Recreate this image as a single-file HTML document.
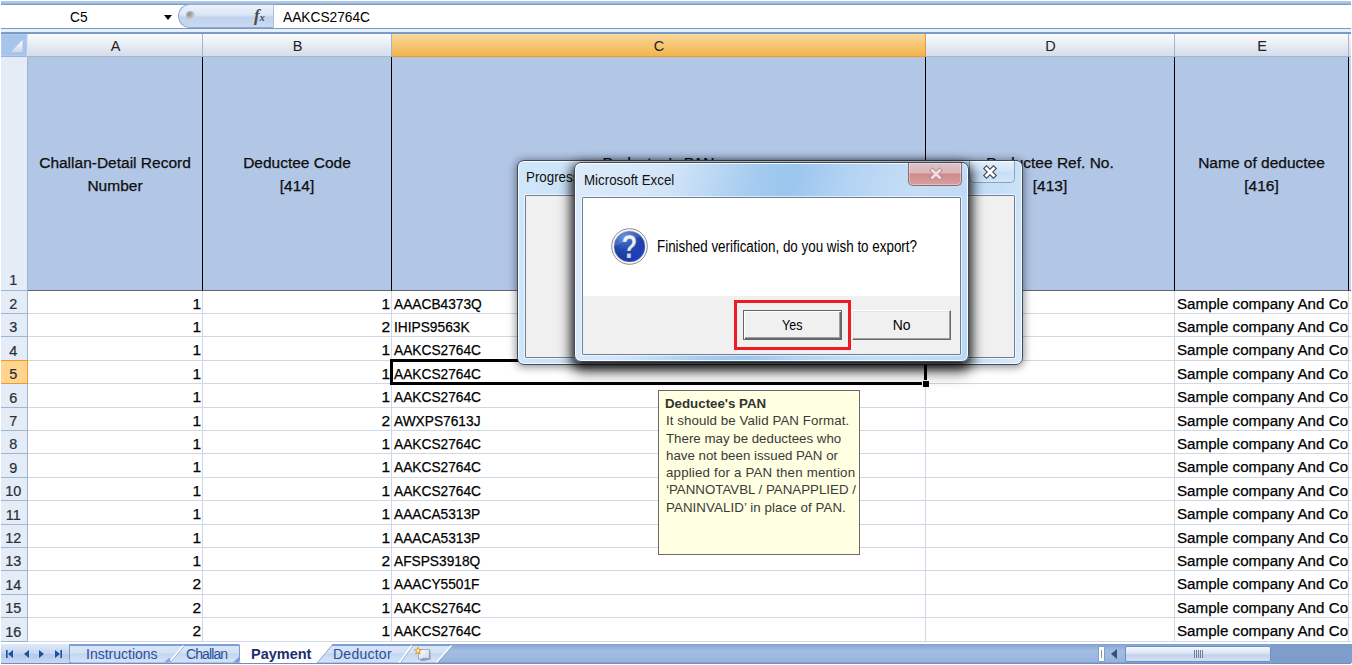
<!DOCTYPE html><html><head><meta charset="utf-8"><title>Microsoft Excel</title><style>*{box-sizing:border-box;margin:0;padding:0}
html,body{width:1352px;height:665px;overflow:hidden;background:#fff}
body{font-family:"Liberation Sans",sans-serif;color:#000}
#app{position:relative;width:1352px;height:665px;overflow:hidden;background:#fff}
/* formula bar */
#fbar{position:absolute;left:0;top:0;width:1352px;height:34px;background:#fff}
#fbar .topline{position:absolute;left:1px;top:1px;right:1px;height:3.500px;background:linear-gradient(#b4cbea 0,#a7c1e5 60%,#7b9cc6 70%,#7b9cc6 100%)}
#fbar .botline{position:absolute;left:1px;top:28px;right:1px;height:6px;background:linear-gradient(#7a9bc4 0,#7a9bc4 1px,#e6effc 1px,#e6effc 4.300px,#7f9ec7 4.300px,#7595c0 6px)}
#fbar .name{position:absolute;left:70px;top:8px;font-size:15.500px;line-height:18px;color:#000;transform:scaleX(.886);transform-origin:0 50%}
#fbar .dd{position:absolute;left:164px;top:15px;width:0;height:0;border-left:4px solid transparent;border-right:4px solid transparent;border-top:5px solid #000}
#fbar .pill{position:absolute;left:178px;top:4px;width:96px;height:24px;border:1px solid #8faad3;border-right:1px solid #a9bfdf;border-radius:12px 0 0 12px;background:linear-gradient(#eef3fb 0%,#dbe6f6 45%,#c0d3ee 55%,#c9daf1 100%)}
#fbar .knob{position:absolute;left:185.500px;top:11px;width:9px;height:9px;border-radius:50%;background:radial-gradient(circle at 35% 35%,#8e8e8e,#c9c9c9 60%,#f2f2f2)}
#fbar .fx{position:absolute;left:254px;top:6px;font-family:"Liberation Serif",serif;font-style:italic;font-weight:bold;font-size:17px;line-height:20px;color:#4a4a4a}
#fbar .fx small{font-size:10px;font-style:italic}
#fbar .val{position:absolute;left:282.500px;top:8px;font-size:15.500px;line-height:18px;color:#000;transform:scaleX(.886);transform-origin:0 50%}
/* column headers */
#colhdr{position:absolute;left:0;top:34px;width:1352px;height:23px}
.corner{position:absolute;left:1px;top:0;width:27px;height:23px;background:#a9c4ec;border-right:1px solid #d9e4f5;border-bottom:1px solid #9db4d8;box-shadow:inset 0 0 0 1px #b3cbef}
.corner svg{position:absolute;left:9px;top:5px}
.ch{position:absolute;top:0;height:23px;background:linear-gradient(#f9fafc 0%,#eef1f7 35%,#dfe5ef 70%,#d5dde9 100%);border-right:1px solid #9eb6ce;border-bottom:1px solid #9eb6ce;text-align:center;font-size:14.5px;line-height:23px;color:#222;padding-top:1px;padding-left:1px}
.ch.sel{background:linear-gradient(#f9d99f 0%,#f6c878 45%,#f1b549 100%);border-right:1px solid #f29536;border-left:0;border-bottom:1px solid #f29536;border-top:0;line-height:22px}
/* row 1 */
#row1{position:absolute;left:0;top:57px;width:1352px;height:234px}
.rh{position:absolute;left:1px;top:0;width:27px;height:100%;background:#e4ecf7;border-right:1px solid #9eb6ce;border-bottom:1px solid #9eb6ce;text-align:center;font-size:15px;color:#222}
.rh span{position:absolute;left:-2.500px;right:0;bottom:0.500px;font-size:15.500px;color:#26323c;line-height:19px;transform:scaleX(.93);-webkit-text-stroke:.2px #222}
.rh.r1 span{bottom:1px;line-height:18px}
.rh.sel{background:#ffd58d;border-bottom:1px solid #f29536;border-right:1px solid #f29536;box-shadow:0 -1px 0 #f29536}
.hc{position:absolute;top:0;height:234px;background:#b2c6e6;border-right:1px solid #000;border-bottom:1px solid #63666d}
.ht{position:absolute;left:0;right:0;top:94px;text-align:center;font-size:15.500px;line-height:23.4px;color:#111}
/* grid */
#grid{position:absolute;left:0;top:0;width:1352px;height:665px}
.row{position:absolute;left:0;width:1352px}
.c{position:absolute;top:0;height:100%;border-right:1px solid #d0d7e5;border-bottom:1px solid #d0d7e5;font-size:15.500px;line-height:22px;padding-top:2px;white-space:nowrap;overflow:hidden;color:#000}
.c.num{text-align:right;padding-right:1px}
.c.txt{text-align:left;padding-left:2px}
.c span{display:inline-block;transform-origin:0 50%}
.c.pan{padding-left:2px}
.c.num span{transform:none}
.c.pan span{transform:scaleX(.886)}
.c.nm span{transform:scaleX(.978)}
/* selection */
#selbox{position:absolute;left:390px;top:359px;width:537px;height:26px;border:3px solid #000}
#selhandle{position:absolute;left:922px;top:380px;width:7px;height:7px;background:#000;border:1px solid #fff;border-right:0;border-bottom:0}
/* tooltip */
#tip{position:absolute;left:658px;top:390px;width:202px;height:165px;background:#ffffe1;border:1px solid #6b6b6b;padding:4px 0 0 7px;font-size:13.300px;line-height:17.3px;color:#3a3a3a;white-space:nowrap;overflow:hidden}
#tip b{color:#333;margin-left:-1px}
/* tab bar */
#tabbar{position:absolute;left:0;top:642px;width:1352px;height:23px;background:#fff}
#tabbar .tbbg{position:absolute;left:1px;top:2px;right:1px;height:20px;background:linear-gradient(#7f9fd0 0,#8dabd8 2px,#a3bce2 7px,#9db7df 14px,#97b2dc 18px,#6f8fc4 19px,#6f8fc4 20px)}
#tabbar .navbg{position:absolute;left:1px;top:2px;width:68px;height:19px;background:linear-gradient(#dfe9f8,#c5d6f0 50%,#b5caea 55%,#c7d8f1)}
#tabbar .nav{position:absolute;left:0;top:3px}
#tabbar .tabs{position:absolute;left:68px;top:3px;overflow:visible}
#tabbar .tab{position:absolute;top:3px;font-size:14px;line-height:18px;color:#2a4f9c;white-space:nowrap}
#tabbar .tab.act{font-weight:bold;color:#1c2f6b;font-size:14.500px}
#tabbar .newtab{position:absolute;left:413.500px;top:4.500px}
#tabbar .split{position:absolute;left:1098px;top:4px;width:7px;height:16px;background:#fff;border:1px solid #7f9fce;border-radius:1px}
#tabbar .split:after{content:"";position:absolute;left:2px;top:3px;width:1px;height:8px;background:#7f8fa8}
#tabbar .larrow{position:absolute;left:1111px;top:7px;width:0;height:0;border-top:5px solid transparent;border-bottom:5px solid transparent;border-right:6px solid #3b4f73}
#tabbar .thumb{position:absolute;left:1125px;top:4px;width:146px;height:16px;border:1px solid #6f8fc0;border-radius:2px;background:linear-gradient(#f4f7fc,#dbe5f4 45%,#c3d3ec 55%,#d2dff2)}
#tabbar .thumb i{position:absolute;left:68px;top:3px;width:9px;height:8px;background:repeating-linear-gradient(90deg,#6d7f9e 0,#6d7f9e 1px,transparent 1px,transparent 2px)}
#tabbar .track{position:absolute;left:1271px;top:2px;width:81px;height:19px;background:#7f9dcb}
#tabbar .botl{position:absolute;left:1px;right:1px;top:20.500px;height:1.500px;background:#6f8fc4}
/* windows */
.win{position:absolute;border:1px solid #3c4a5c;border-radius:7px;background:linear-gradient(105deg,#dcebfa 0%,#d2e5f8 22%,#a3caef 42%,#9cc6ee 50%,#b3d3f3 62%,#c5def6 78%,#bbd8f4 100%);box-shadow:inset 0 0 0 1px rgba(255,255,255,.85)}
.win .title{position:absolute;font-size:15px;line-height:18px;color:#111;white-space:nowrap;transform:scaleX(.888);transform-origin:0 50%}
.win .client{position:absolute;background:#f0f0f0;border:1px solid #6f7f95;border-radius:1px;box-shadow:0 0 0 1px rgba(255,255,255,.6)}
#w1{left:517px;top:160px;width:506px;height:205px;background:linear-gradient(105deg,#d0e6fa 0%,#c8e0f8 30%,#b4d3f2 60%,#c6dff7 88%,#d9eafb 100%);box-shadow:inset 0 0 0 1px rgba(255,255,255,.85),0 1px 9px 1px rgba(0,0,0,.45)}
#w1 .title{left:8px;top:7px}
#w1 .client{left:7px;top:34px;width:490px;height:163px}
#w1 .xbtn{position:absolute;left:451px;top:0;width:46px;height:22px;border:1px solid #8aa3c4;border-top:0;border-radius:0 0 5px 5px;background:linear-gradient(rgba(255,255,255,.55),rgba(255,255,255,.15) 50%,rgba(255,255,255,0) 55%,rgba(255,255,255,.2))}
.xbtn svg{position:absolute;left:14px;top:4px}
#w1 .xbtn svg{left:12px;top:4px}
#w2shadow{position:absolute;left:574px;top:162px;width:395px;height:200px;border-radius:7px;box-shadow:0 4px 11px 2px rgba(0,0,0,.8),0 9px 16px 2px rgba(0,0,0,.4)}
#w2{left:574px;top:162px;width:395px;height:200px}
#w2 .title{left:9px;top:8px}
#w2 .client{left:7px;top:34px;width:379px;height:158px}
#w2 .xbtn{position:absolute;left:333px;top:0;width:54px;height:23px;border:1px solid #8d6a70;border-top:0;border-radius:0 0 5px 5px;background:linear-gradient(#dcc3c8 0%,#dbb5b8 45%,#cf8a8a 50%,#d7a0a0 100%);box-shadow:inset 0 0 0 1px rgba(255,255,255,.35)}
#w2 .xbtn svg{left:19px;top:3.500px}
#w2 .white{position:absolute;left:0;top:0;right:0;height:98px;background:#fff}
#w2 .qicon{position:absolute;left:28px;top:30px}
#w2 .msg{position:absolute;left:73.500px;top:40px;font-size:16px;line-height:18px;color:#000;white-space:nowrap;transform:translateY(-.5px) scaleX(.8376);transform-origin:0 50%}
#w2 .redrect{position:absolute;left:151px;top:102px;width:117px;height:50px;border:3px solid #ed1c24}
#w2 .btn{position:absolute;top:112px;width:99px;height:30px;background:#f0f0f0;border:1px solid #fff;border-right-color:#696969;border-bottom-color:#696969;box-shadow:inset -1px -1px 0 #a0a0a0,inset 1px 1px 0 #e3e3e3;text-align:center;font-size:15px;line-height:28px;color:#000}
#w2 .btn span{display:inline-block}
#w2 .btn.yes span{transform:scaleX(.83)}
#w2 .btn.no span{transform:scaleX(.93)}
#w2 .btn.yes{left:160px;border:1px solid #646464;box-shadow:inset 1px 1px 0 #fff,inset -1px -1px 0 #696969,inset -2px -2px 0 #a0a0a0}
#w2 .btn.no{left:269px}

.c,.ht{-webkit-text-stroke:.25px #000}
</style></head><body>
<div id="app">
<div id="fbar"><div class="topline"></div><div class="botline"></div>
<div class="name">C5</div><div class="dd"></div>
<div class="pill"></div><div class="knob"></div>
<div class="fx">f<small>x</small></div>
<div class="val">AAKCS2764C</div></div>

<div id="colhdr">
<div class="corner"><svg width="14" height="14" viewBox="0 0 14 14"><defs><linearGradient id="cg" x1="0" y1="0" x2="0" y2="1"><stop offset="0" stop-color="#fff"/><stop offset="1" stop-color="#cfd8e8"/></linearGradient></defs><path d="M12.500 1V13H1Z" fill="url(#cg)"/></svg></div>
<div class="ch" style="left:28px;width:175px"><span>A</span></div>
<div class="ch" style="left:203px;width:189px"><span>B</span></div>
<div class="ch sel" style="left:392px;width:534px"><span>C</span></div>
<div class="ch" style="left:926px;width:249px"><span>D</span></div>
<div class="ch" style="left:1175px;width:174px"><span>E</span></div>
<div class="ch" style="left:1349px;width:2px;border-right:0"></div>
</div>
<div id="row1">
<div class="rh r1"><span>1</span></div>
<div class="hc" style="left:28px;width:175px"><div class="ht">Challan-Detail Record<br>Number</div></div>
<div class="hc" style="left:203px;width:189px"><div class="ht">Deductee Code<br>[414]</div></div>
<div class="hc" style="left:392px;width:534px"><div class="ht">Deductee's PAN<br>[415]</div></div>
<div class="hc" style="left:926px;width:249px"><div class="ht">Deductee Ref. No.<br>[413]</div></div>
<div class="hc" style="left:1175px;width:174px"><div class="ht">Name of deductee<br>[416]</div></div>
<div class="hc" style="left:1349px;width:2px;border-right:0;background:#c5d4f0"></div>
</div>
<div id="grid">
<div class="row" style="top:291px;height:23px">
<div class="rh"><span>2</span></div>
<div class="c num" style="left:28px;width:175px"><span>1</span></div>
<div class="c num" style="left:203px;width:189px"><span>1</span></div>
<div class="c txt pan" style="left:392px;width:534px"><span>AAACB4373Q</span></div>
<div class="c" style="left:926px;width:249px"></div>
<div class="c txt nm" style="left:1175px;width:174px"><span>Sample company And Co</span></div>
<div class="c" style="left:1349px;width:2px;border-right:0"></div>
</div>
<div class="row" style="top:314px;height:23px">
<div class="rh"><span>3</span></div>
<div class="c num" style="left:28px;width:175px"><span>1</span></div>
<div class="c num" style="left:203px;width:189px"><span>2</span></div>
<div class="c txt pan" style="left:392px;width:534px"><span>IHIPS9563K</span></div>
<div class="c" style="left:926px;width:249px"></div>
<div class="c txt nm" style="left:1175px;width:174px"><span>Sample company And Co</span></div>
<div class="c" style="left:1349px;width:2px;border-right:0"></div>
</div>
<div class="row" style="top:337px;height:24px">
<div class="rh"><span>4</span></div>
<div class="c num" style="left:28px;width:175px"><span>1</span></div>
<div class="c num" style="left:203px;width:189px"><span>1</span></div>
<div class="c txt pan" style="left:392px;width:534px"><span>AAKCS2764C</span></div>
<div class="c" style="left:926px;width:249px"></div>
<div class="c txt nm" style="left:1175px;width:174px"><span>Sample company And Co</span></div>
<div class="c" style="left:1349px;width:2px;border-right:0"></div>
</div>
<div class="row" style="top:361px;height:23px">
<div class="rh sel"><span>5</span></div>
<div class="c num" style="left:28px;width:175px"><span>1</span></div>
<div class="c num" style="left:203px;width:189px"><span>1</span></div>
<div class="c txt pan" style="left:392px;width:534px"><span>AAKCS2764C</span></div>
<div class="c" style="left:926px;width:249px"></div>
<div class="c txt nm" style="left:1175px;width:174px"><span>Sample company And Co</span></div>
<div class="c" style="left:1349px;width:2px;border-right:0"></div>
</div>
<div class="row" style="top:384px;height:24px">
<div class="rh"><span>6</span></div>
<div class="c num" style="left:28px;width:175px"><span>1</span></div>
<div class="c num" style="left:203px;width:189px"><span>1</span></div>
<div class="c txt pan" style="left:392px;width:534px"><span>AAKCS2764C</span></div>
<div class="c" style="left:926px;width:249px"></div>
<div class="c txt nm" style="left:1175px;width:174px"><span>Sample company And Co</span></div>
<div class="c" style="left:1349px;width:2px;border-right:0"></div>
</div>
<div class="row" style="top:408px;height:23px">
<div class="rh"><span>7</span></div>
<div class="c num" style="left:28px;width:175px"><span>1</span></div>
<div class="c num" style="left:203px;width:189px"><span>2</span></div>
<div class="c txt pan" style="left:392px;width:534px"><span>AWXPS7613J</span></div>
<div class="c" style="left:926px;width:249px"></div>
<div class="c txt nm" style="left:1175px;width:174px"><span>Sample company And Co</span></div>
<div class="c" style="left:1349px;width:2px;border-right:0"></div>
</div>
<div class="row" style="top:431px;height:23px">
<div class="rh"><span>8</span></div>
<div class="c num" style="left:28px;width:175px"><span>1</span></div>
<div class="c num" style="left:203px;width:189px"><span>1</span></div>
<div class="c txt pan" style="left:392px;width:534px"><span>AAKCS2764C</span></div>
<div class="c" style="left:926px;width:249px"></div>
<div class="c txt nm" style="left:1175px;width:174px"><span>Sample company And Co</span></div>
<div class="c" style="left:1349px;width:2px;border-right:0"></div>
</div>
<div class="row" style="top:454px;height:24px">
<div class="rh"><span>9</span></div>
<div class="c num" style="left:28px;width:175px"><span>1</span></div>
<div class="c num" style="left:203px;width:189px"><span>1</span></div>
<div class="c txt pan" style="left:392px;width:534px"><span>AAKCS2764C</span></div>
<div class="c" style="left:926px;width:249px"></div>
<div class="c txt nm" style="left:1175px;width:174px"><span>Sample company And Co</span></div>
<div class="c" style="left:1349px;width:2px;border-right:0"></div>
</div>
<div class="row" style="top:478px;height:23px">
<div class="rh"><span>10</span></div>
<div class="c num" style="left:28px;width:175px"><span>1</span></div>
<div class="c num" style="left:203px;width:189px"><span>1</span></div>
<div class="c txt pan" style="left:392px;width:534px"><span>AAKCS2764C</span></div>
<div class="c" style="left:926px;width:249px"></div>
<div class="c txt nm" style="left:1175px;width:174px"><span>Sample company And Co</span></div>
<div class="c" style="left:1349px;width:2px;border-right:0"></div>
</div>
<div class="row" style="top:501px;height:24px">
<div class="rh"><span>11</span></div>
<div class="c num" style="left:28px;width:175px"><span>1</span></div>
<div class="c num" style="left:203px;width:189px"><span>1</span></div>
<div class="c txt pan" style="left:392px;width:534px"><span>AAACA5313P</span></div>
<div class="c" style="left:926px;width:249px"></div>
<div class="c txt nm" style="left:1175px;width:174px"><span>Sample company And Co</span></div>
<div class="c" style="left:1349px;width:2px;border-right:0"></div>
</div>
<div class="row" style="top:525px;height:23px">
<div class="rh"><span>12</span></div>
<div class="c num" style="left:28px;width:175px"><span>1</span></div>
<div class="c num" style="left:203px;width:189px"><span>1</span></div>
<div class="c txt pan" style="left:392px;width:534px"><span>AAACA5313P</span></div>
<div class="c" style="left:926px;width:249px"></div>
<div class="c txt nm" style="left:1175px;width:174px"><span>Sample company And Co</span></div>
<div class="c" style="left:1349px;width:2px;border-right:0"></div>
</div>
<div class="row" style="top:548px;height:23px">
<div class="rh"><span>13</span></div>
<div class="c num" style="left:28px;width:175px"><span>1</span></div>
<div class="c num" style="left:203px;width:189px"><span>2</span></div>
<div class="c txt pan" style="left:392px;width:534px"><span>AFSPS3918Q</span></div>
<div class="c" style="left:926px;width:249px"></div>
<div class="c txt nm" style="left:1175px;width:174px"><span>Sample company And Co</span></div>
<div class="c" style="left:1349px;width:2px;border-right:0"></div>
</div>
<div class="row" style="top:571px;height:24px">
<div class="rh"><span>14</span></div>
<div class="c num" style="left:28px;width:175px"><span>2</span></div>
<div class="c num" style="left:203px;width:189px"><span>1</span></div>
<div class="c txt pan" style="left:392px;width:534px"><span>AAACY5501F</span></div>
<div class="c" style="left:926px;width:249px"></div>
<div class="c txt nm" style="left:1175px;width:174px"><span>Sample company And Co</span></div>
<div class="c" style="left:1349px;width:2px;border-right:0"></div>
</div>
<div class="row" style="top:595px;height:23px">
<div class="rh"><span>15</span></div>
<div class="c num" style="left:28px;width:175px"><span>2</span></div>
<div class="c num" style="left:203px;width:189px"><span>1</span></div>
<div class="c txt pan" style="left:392px;width:534px"><span>AAKCS2764C</span></div>
<div class="c" style="left:926px;width:249px"></div>
<div class="c txt nm" style="left:1175px;width:174px"><span>Sample company And Co</span></div>
<div class="c" style="left:1349px;width:2px;border-right:0"></div>
</div>
<div class="row" style="top:618px;height:24px">
<div class="rh"><span>16</span></div>
<div class="c num" style="left:28px;width:175px"><span>2</span></div>
<div class="c num" style="left:203px;width:189px"><span>1</span></div>
<div class="c txt pan" style="left:392px;width:534px"><span>AAKCS2764C</span></div>
<div class="c" style="left:926px;width:249px"></div>
<div class="c txt nm" style="left:1175px;width:174px"><span>Sample company And Co</span></div>
<div class="c" style="left:1349px;width:2px;border-right:0"></div>
</div>
</div>
<div id="selbox"></div><div id="selhandle"></div>
<div id="tip"><b>Deductee's PAN</b><br><span style="letter-spacing:.09px">It should be Valid PAN Format.</span><br><span>There may be deductees who</span><br><span>have not been issued PAN or</span><br><span style="letter-spacing:.18px">applied for a PAN then mention</span><br><span>‘PANNOTAVBL / PANAPPLIED /</span><br><span style="letter-spacing:.08px">PANINVALID’ in place of PAN.</span></div>
<div id="tabbar">
 <div class="tbbg"></div>
 <div class="navbg"></div>
 <svg class="nav" width="70" height="18" viewBox="0 0 70 18">
  <g fill="#1f4fa0"><rect x="6" y="5" width="1.6" height="8"/><path d="M13 5v8l-5-4z"/><path d="M29 5v8l-5-4z"/><path d="M39 5v8l5-4z"/><path d="M55 5v8l5-4z"/><rect x="60.4" y="5" width="1.6" height="8"/></g>
 </svg>
 <svg class="tabs" width="400" height="20" viewBox="0 0 400 20">
  <defs><linearGradient id="tg" x1="0" y1="0" x2="0" y2="1"><stop offset="0" stop-color="#dbe7f8"/><stop offset="0.45" stop-color="#d3e1f6"/><stop offset="0.5" stop-color="#c3d6f1"/><stop offset="1" stop-color="#d6e4f7"/></linearGradient></defs>
  <path d="M343 0H383.500L368 17.500H330Z" fill="url(#tg)"/>
  <path d="M250 0H343.800L331.400 17.500H250Z" fill="url(#tg)"/>
  <path d="M1.500 0H115.400L101.100 17.500H4.500Q1.500 17.500 1.500 14.500Z" fill="url(#tg)"/>
  <path d="M115.400 0H171.500V17.500H101.100Z" fill="url(#tg)"/>
  <path d="M1.500 15V0.500H383" fill="none" stroke="#7c9ccf" stroke-width="1"/>
  <g stroke="#fff" stroke-width="1.700" fill="none"><path d="M383.500 0.500L368.500 17.500"/><path d="M343.800 0.500L331.400 17.500"/><path d="M115.400 0.500L101.100 17.500"/></g>
  <g stroke="#8aa6d6" stroke-width=".8" fill="none"><path d="M384.900 0.500L369.900 17.500"/><path d="M345.200 0.500L332.800 17.500"/><path d="M116.800 0.500L102.500 17.500"/></g>
  <path d="M171.500 -1.500H265.200L248.800 18.500H175.500Q171.500 18.500 171.500 15Z" fill="#fff"/>
  <path d="M171.500 16V0" fill="none" stroke="#7c9ccf" stroke-width="1"/>
  <path d="M265.200 -1L249 18" fill="none" stroke="#8aa6d6" stroke-width="1"/>
  <path d="M165 17.500L171 12V17.500Z" fill="#7c9ccf"/><path d="M96 17.500L101.500 12.500L103 17.500Z" fill="#8aa6d6"/>
 </svg>
 <div class="tab" style="left:86px">Instructions</div>
 <div class="tab" style="left:186px;letter-spacing:-.9px">Challan</div>
 <div class="tab act" style="left:251px">Payment</div>
 <div class="tab" style="left:333px;letter-spacing:.25px">Deductor</div>
 <svg class="newtab" width="20" height="15" viewBox="0 0 20 15"><defs><linearGradient id="ng" x1="0" y1="0" x2="1" y2="1"><stop offset="0" stop-color="#fff"/><stop offset="1" stop-color="#c9d3e6"/></linearGradient></defs><path d="M6 13.500Q9 14.500 12 13.500L16.500 12.500V3.500H6Z" fill="#5f6f8f" opacity=".55"/><path d="M4.500 2.500H15.500V11.500H8.500Q7 13 4.500 12Z" fill="url(#ng)" stroke="#7f90b0" stroke-width=".7"/><path d="M4 0l1.100 2.400 2.600.3-1.900 1.800.5 2.600L4 5.800 1.700 7.100l.5-2.600L.3 2.700l2.600-.3z" fill="#f6b436" stroke="#d98a14" stroke-width=".5"/><circle cx="4" cy="3.700" r="1.200" fill="#fff3c8"/></svg>
 <div class="split"></div>
 <div class="larrow"></div>
 <div class="thumb"><i></i></div>
 <div class="track"></div>
 <div class="botl"></div>
</div>
<!-- progress window -->
<div id="w1" class="win">
 <div class="title">Progress</div>
 <div class="xbtn"><svg width="16" height="14" viewBox="0 0 16 14"><path d="M2.700 1.700L13.300 12.300M13.300 1.700L2.700 12.300" stroke="#434a55" stroke-width="5" stroke-linecap="butt"/><path d="M3.500 2.500L12.500 11.500M12.500 2.500L3.500 11.500" stroke="#fff" stroke-width="2.800" stroke-linecap="butt"/></svg></div>
 <div class="client"></div>
</div>
<!-- message box -->
<div id="w2shadow"></div>
<div id="w2" class="win">
 <div class="title">Microsoft Excel</div>
 <div class="xbtn red"><svg width="16" height="14" viewBox="0 0 16 14"><path d="M2.900 1.900L13.100 12.100M13.100 1.900L2.900 12.100" stroke="#bb878c" stroke-width="4.600" stroke-linecap="butt"/><path d="M3.500 2.500L12.500 11.500M12.500 2.500L3.500 11.500" stroke="#f3dfe0" stroke-width="2.800" stroke-linecap="butt"/></svg></div>
 <div class="client">
  <div class="white"></div>
  <svg class="qicon" width="37" height="37" viewBox="0 0 37 37">
   <defs><radialGradient id="qg" cx="0.35" cy="0.2" r="0.9"><stop offset="0" stop-color="#5583dc"/><stop offset="0.45" stop-color="#2049ae"/><stop offset="1" stop-color="#142c94"/></radialGradient>
   <linearGradient id="qh" x1="0" y1="0" x2="1" y2="1"><stop offset="0.55" stop-color="#2a44d8" stop-opacity="0"/><stop offset="1" stop-color="#2a48e8" stop-opacity=".9"/></linearGradient>
   <linearGradient id="qt" x1="0" y1="0" x2="0" y2="1"><stop offset="0" stop-color="#ffffff"/><stop offset="1" stop-color="#cfd3dc"/></linearGradient></defs>
   <circle cx="18.500" cy="18.500" r="17.800" fill="#fdfdfd" stroke="#7e7e7e" stroke-width="0.900"/>
   <circle cx="18.500" cy="18.500" r="15.600" fill="url(#qg)" stroke="#c2c6cf" stroke-width="0.600"/>
   <circle cx="18.500" cy="18.500" r="15.600" fill="url(#qh)"/>
   <path d="M3.200 19A15.300 15.300 0 0 1 30 8.500Q14 12 3.200 19Z" fill="#fff" opacity="0.120"/>
   <text transform="translate(18.300 30) scale(.78 1)" text-anchor="middle" font-family="Liberation Sans, sans-serif" font-weight="bold" font-size="33" fill="url(#qt)" stroke="#1a2f7c" stroke-opacity=".35" stroke-width=".5">?</text>
  </svg>
  <div class="msg">Finished verification, do you wish to export?</div>
  <div class="redrect"></div>
  <div class="btn yes"><span>Yes</span></div>
  <div class="btn no"><span>No</span></div>
 </div>
</div>

</div></body></html>
